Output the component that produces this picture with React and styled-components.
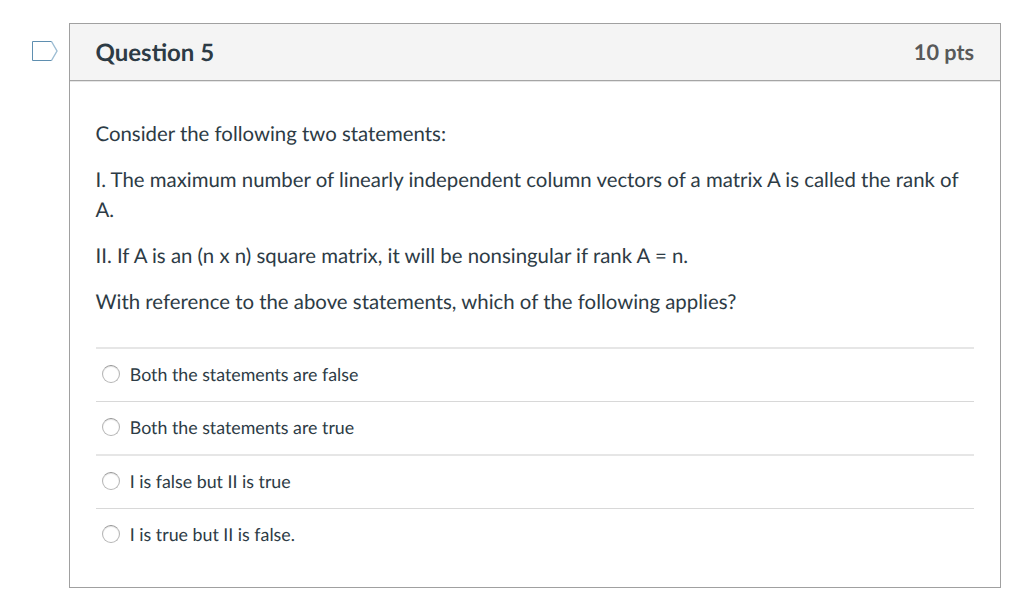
import React from "react";
import styled, { createGlobalStyle } from "styled-components";

const GlobalStyle = createGlobalStyle`
  body {
    margin: 0;
    background: #fff;
    color: #2d3b45;
    font-family: Lato, "Liberation Sans", sans-serif;
    text-rendering: geometricPrecision;
  }
`;

const Page = styled.main`
  display: flex;
  align-items: flex-start;
  padding: 23px 23px 0 31px;
`;

const Flag = styled.svg`
  flex: none;
  width: 27px;
  height: 22px;
  margin: 17px 11px 0 0;
`;

const Card = styled.section`
  flex: 1;
  box-sizing: border-box;
  height: 565px;
  border: 1px solid #a0a0a0;
`;

const Header = styled.header`
  display: flex;
  align-items: center;
  justify-content: space-between;
  height: 56px;
  padding: 0 26px 0 25.5px;
  background: #f4f4f4;
  border-bottom: 1px solid #a5a5a5;
  box-shadow: 0 1px 0 #e6e6e6;
`;

const Title = styled.h1`
  margin: 0;
  font-size: 24px;
  font-weight: 700;
`;

const Points = styled.span`
  color: #595959;
  font-size: 21.7px;
  font-weight: 700;
`;

const Body = styled.div`
  padding: 38.1px 26px 0 25.5px;
`;

const Text = styled.p`
  margin: 0 0 15.2px;
  font-size: 20.39px;
  line-height: 30.55px;
`;

const Answers = styled.div`
  margin-top: 30px;
`;

const Answer = styled.label`
  display: flex;
  align-items: center;
  box-sizing: border-box;
  height: 53.4px;
  padding: 0 0 1px 6px;
  border-top: 1px solid #d8d8d8;
  font-size: 17.8px;

  &:nth-child(odd) {
    padding-bottom: 2px;
    border-top: 2px solid #e6e6e6;
  }
`;

const Radio = styled.input`
  appearance: none;
  box-sizing: border-box;
  width: 18px;
  height: 18px;
  margin: 0 10.3px 0 0;
  border: 1px solid #b5b5b5;
  border-top-color: #949494;
  border-radius: 50%;
  box-shadow: inset 0 1px 1px #e4e4e4;
`;

const statements = [
  "Consider the following two statements:",
  "I. The maximum number of linearly independent column vectors of a matrix A is called the rank of A.",
  "II. If A is an (n x n) square matrix, it will be nonsingular if rank A = n.",
  "With reference to the above statements, which of the following applies?",
];

const answers = [
  "Both the statements are false",
  "Both the statements are true",
  "I is false but II is true",
  "I is true but II is false.",
];

function App() {
  return (
    <Page>
      <GlobalStyle />
      <Flag viewBox="0 0 27 22" fill="none">
        <path d="M20.5 1.5L26 11L20.5 20.5" stroke="#9dbdd3" strokeWidth="1.4" />
        <path d="M20.5 1.5H1.5V20.5H20.5" stroke="#5f8fb0" />
      </Flag>
      <Card>
        <Header>
          <Title>Question 5</Title>
          <Points>10 pts</Points>
        </Header>
        <Body>
          {statements.map((text) => (
            <Text key={text}>{text}</Text>
          ))}
          <Answers>
            {answers.map((answer) => (
              <Answer key={answer}>
                <Radio type="radio" name="question-5" />
                {answer}
              </Answer>
            ))}
          </Answers>
        </Body>
      </Card>
    </Page>
  );
}

export default App;
